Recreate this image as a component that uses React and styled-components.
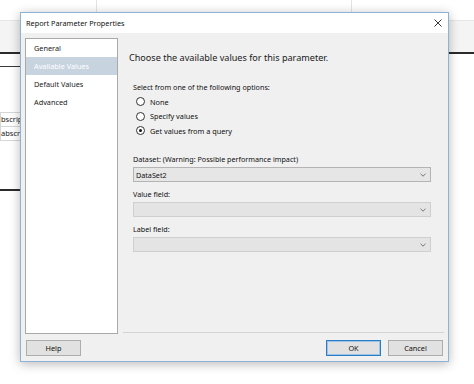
import React from "react";
import styled, { createGlobalStyle } from "styled-components";

const GlobalStyle = createGlobalStyle`
    html, body {
        margin: 0;
        padding: 0;
        background: #ffffff;
    }
    body {
        font-family: "Noto Sans", "Liberation Sans", sans-serif;
        color: #1a1a1a;
    }
`;

const Desktop = styled.div`
    position: relative;
    width: 474px;
    height: 384px;
    overflow: hidden;
    background: #ffffff;
`;

/* ---------- report designer behind the dialog ---------- */

const Backdrop = styled.div`
    display: flex;
    flex-direction: column;
    width: 100%;
`;

const HeaderCells = styled.div`
    display: grid;
    grid-template-columns: 97px 255px 1fr;
    height: 20px;
`;

const HeaderCell = styled.div`
    border-right: 1px solid #e3e3e3;
`;

const Band = styled.div`
    height: 31px;
    background: #f4f4f4;
    border-top: 1px solid #e6e6e6;
    border-bottom: 2px solid #2b2b2b;
`;

const Rule = styled.div`
    width: ${(p) => p.$width}px;
    height: 0;
    border-top: ${(p) => p.$weight || 1}px solid ${(p) => p.$color || "#333"};
    margin-top: ${(p) => p.$top}px;
`;

const FieldBox = styled.div`
    width: 60px;
    height: 13px;
    border: 1px solid #d6d6d6;
    border-top: ${(p) => (p.$first ? "1px solid #d6d6d6" : "none")};
    margin-top: ${(p) => p.$top || 0}px;
    font-size: 7.5px;
    line-height: 13px;
    white-space: nowrap;
    overflow: hidden;
    color: #222;
`;

/* ---------- dialog window ---------- */

const Window = styled.div`
    position: absolute;
    left: 20px;
    top: 12px;
    width: 427px;
    height: 348px;
    border: 1px solid #8db2d8;
    background: #f0f0f0;
    box-shadow: 0 2px 10px rgba(0, 0, 0, 0.28);
    display: flex;
    flex-direction: column;
`;

const TitleBar = styled.div`
    height: 20px;
    background: #ffffff;
    display: flex;
    align-items: center;
    justify-content: space-between;
    padding: 0 4px 0 5px;
    font-size: 7.3px;
    color: #111;
`;

const CloseGlyph = styled.svg`
    width: 8px;
    height: 8px;
    margin-right: 2px;
`;

const Body = styled.div`
    flex: 1;
    display: flex;
    flex-direction: column;
    padding: 5px 4px 5px 4px;
    gap: 6px;
`;

const Main = styled.div`
    flex: 1;
    display: flex;
    gap: 5px;
`;

const Nav = styled.div`
    width: 91px;
    background: #ffffff;
    border: 1px solid #a9a9a9;
    display: flex;
    flex-direction: column;
`;

const NavItem = styled.div`
    height: 18px;
    line-height: 18px;
    padding-left: 8px;
    font-size: 7.3px;
    color: ${(p) => (p.$active ? "#ffffff" : "#1a1a1a")};
    background: ${(p) => (p.$active ? "#c7d3df" : "transparent")};
`;

const Content = styled.div`
    flex: 1;
    border-bottom: 1px solid #d4d4d4;
    margin-bottom: 1px;
    padding: 12px 0 0 6px;
    display: flex;
    flex-direction: column;
`;

const Heading = styled.div`
    font-size: 9.1px;
    line-height: 15px;
    color: #1a1a1a;
`;

const Section = styled.div`
    margin-top: ${(p) => p.$top}px;
    padding-left: 4px;
    display: flex;
    flex-direction: column;
`;

const Label = styled.div`
    font-size: 7.2px;
    line-height: 11px;
    margin-bottom: ${(p) => p.$gap || 0}px;
    color: #111;
`;

const RadioRow = styled.div`
    display: flex;
    align-items: center;
    height: 14.5px;
    padding-left: 3px;
    font-size: 7.3px;
    color: #111;
`;

const RadioDot = styled.span`
    width: 7px;
    height: 7px;
    border-radius: 50%;
    border: 1px solid #333;
    background: #fff;
    margin-right: 5px;
    display: flex;
    align-items: center;
    justify-content: center;

    &::after {
        content: "";
        width: 3px;
        height: 3px;
        border-radius: 50%;
        background: ${(p) => (p.$checked ? "#111" : "transparent")};
    }
`;

const Select = styled.div`
    width: 298px;
    height: 15px;
    box-sizing: border-box;
    margin: 2px 0 7px;
    border: 1px solid ${(p) => (p.$disabled ? "#cfcfcf" : "#b4b4b4")};
    background: ${(p) => (p.$disabled ? "#e4e4e4" : "#e6e6e6")};
    display: flex;
    align-items: center;
    justify-content: space-between;
    padding: 0 4px 0 2px;
    font-size: 7.2px;
    color: #111;
`;

const Chevron = styled.svg`
    width: 6px;
    height: 4px;
`;

const Footer = styled.div`
    height: 16px;
    display: flex;
    justify-content: space-between;
    padding-left: 1px;
`;

const ButtonGroup = styled.div`
    display: flex;
    gap: 7px;
    margin-right: 1px;
`;

const Button = styled.button`
    width: 55px;
    height: 16px;
    box-sizing: border-box;
    padding: 0;
    background: #e1e1e1;
    border: 1px solid ${(p) => (p.$primary ? "#2a7cc7" : "#adadad")};
    box-shadow: ${(p) => (p.$primary ? "inset 0 0 0 1px #9cc4e8" : "none")};
    font-family: "Noto Sans", "Liberation Sans", sans-serif;
    font-size: 7.3px;
    color: #111;
`;

function ChevronIcon() {
    return (
        <Chevron viewBox="0 0 6 4">
            <path d="M0.5 0.8 L3 3.2 L5.5 0.8" fill="none" stroke="#6a6a6a" strokeWidth="0.9" />
        </Chevron>
    );
}

export default function App() {
    return (
        <Desktop>
            <GlobalStyle />
            <Backdrop>
                <HeaderCells>
                    <HeaderCell />
                    <HeaderCell />
                    <div />
                </HeaderCells>
                <Band />
                <Rule $width={60} $top={12} $color="#3a3a3a" />
                <FieldBox $first $top={45}>bscription</FieldBox>
                <FieldBox>abscription</FieldBox>
                <Rule $width={60} $top={48} $weight={2} $color="#2b2b2b" />
            </Backdrop>

            <Window>
                <TitleBar>
                    <span>Report Parameter Properties</span>
                    <CloseGlyph viewBox="0 0 8 8">
                        <path d="M0.5 0.5 L7.5 7.5 M7.5 0.5 L0.5 7.5" stroke="#222" strokeWidth="0.9" />
                    </CloseGlyph>
                </TitleBar>
                <Body>
                    <Main>
                        <Nav>
                            <NavItem>General</NavItem>
                            <NavItem $active>Available Values</NavItem>
                            <NavItem>Default Values</NavItem>
                            <NavItem>Advanced</NavItem>
                        </Nav>
                        <Content>
                            <Heading>Choose the available values for this parameter.</Heading>
                            <Section $top={17}>
                                <Label $gap={1.5}>Select from one of the following options:</Label>
                                <RadioRow><RadioDot />None</RadioRow>
                                <RadioRow><RadioDot />Specify values</RadioRow>
                                <RadioRow><RadioDot $checked />Get values from a query</RadioRow>
                            </Section>
                            <Section $top={16}>
                                <Label>Dataset: (Warning: Possible performance impact)</Label>
                                <Select>DataSet2<ChevronIcon /></Select>
                                <Label>Value field:</Label>
                                <Select $disabled><span /><ChevronIcon /></Select>
                                <Label>Label field:</Label>
                                <Select $disabled><span /><ChevronIcon /></Select>
                            </Section>
                        </Content>
                    </Main>
                    <Footer>
                        <Button>Help</Button>
                        <ButtonGroup>
                            <Button $primary>OK</Button>
                            <Button>Cancel</Button>
                        </ButtonGroup>
                    </Footer>
                </Body>
            </Window>
        </Desktop>
    );
}
